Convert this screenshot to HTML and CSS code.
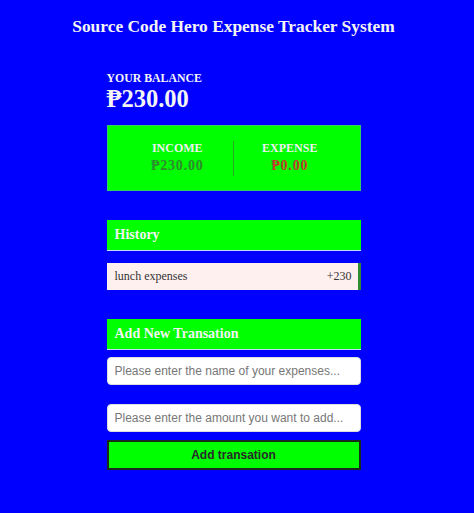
FILE: index.html
```html
<!DOCTYPE html>
<html>
<head>
<meta charset="utf-8">
<link rel="stylesheet" href="styles.css">
</head>
<body>
<h2 class="title">Source Code Hero Expense Tracker System</h2>
<div class="container">
  <h4 class="bal-label">YOUR BALANCE</h4>
  <h1 class="balance">₱230.00</h1>
  <div class="inc-exp">
    <div class="col">
      <h4 class="col-label">INCOME</h4>
      <p class="money plus">₱230.00</p>
    </div>
    <div class="col">
      <h4 class="col-label">EXPENSE</h4>
      <p class="money minus">₱0.00</p>
    </div>
  </div>
  <h3 class="section">History</h3>
  <ul class="list">
    <li class="item plus-item"><span>lunch expenses</span><span>+230</span></li>
  </ul>
  <h3 class="section section-add">Add New Transation</h3>
  <form class="form">
    <input class="field" type="text" placeholder="Please enter the name of your expenses...">
    <input class="field field-amount" type="text" placeholder="Please enter the amount you want to add...">
    <button class="btn" type="button">Add transation</button>
  </form>
</div>
</body>
</html>
```

FILE: styles.css
```css
* { box-sizing: border-box; }
html, body { margin: 0; padding: 0; }
body {
  background: #0000ff;
  width: 467px;
  min-height: 513px;
  font-family: "Liberation Serif", "Times New Roman", serif;
  color: #f4f4f4;
  padding-top: 15px;
}
.title {
  margin: 0;
  text-align: center;
  font-size: 17.4px;
  font-weight: bold;
  line-height: 22px;
}
.container {
  width: 254px;
  margin: 34px auto 0;
}
.bal-label {
  margin: 0;
  font-size: 11.8px;
  line-height: 14px;
  font-weight: bold;
}
.balance {
  margin: 1px 0 0;
  font-size: 24.5px;
  line-height: 26px;
  font-weight: bold;
}
.inc-exp {
  margin-top: 13px;
  height: 66px;
  background: #00ff00;
  border: 1px solid #33cc66;
  display: flex;
  align-items: center;
  padding: 15px 14px;
}
.col {
  flex: 1;
  text-align: center;
  height: 35px;
}
.col:first-of-type { border-right: 1px solid #22aa22; }
.col-label {
  margin: 0;
  font-size: 12px;
  line-height: 14px;
  font-weight: bold;
  color: #f0f0f0;
}
.money {
  margin: 3px 0 0;
  font-size: 14px;
  line-height: 16px;
  font-weight: bold;
  letter-spacing: 0.8px;
}
.plus { color: #2e8b2e; }
.minus { color: #c0392b; }
.section {
  margin: 29px 0 0;
  height: 31px;
  background: #00ff00;
  border-bottom: 1px solid #c8d8ff;
  padding: 0 8px;
  font-size: 14px;
  font-weight: bold;
  line-height: 30px;
  color: #f4f4f4;
}
.list {
  list-style: none;
  margin: 12px 0 0;
  padding: 0;
}
.item {
  height: 27px;
  background: #fff0f0;
  color: #333;
  font-size: 12px;
  display: flex;
  justify-content: space-between;
  align-items: center;
  padding: 0 6px 0 8px;
  border-right: 3px solid #2e8b2e;
}
.section-add { margin-top: 29px; }
.form {
  display: flex;
  flex-direction: column;
  margin-top: 7px;
}
.field {
  height: 28px;
  border: 1px solid #dddddd;
  border-radius: 4px;
  background: #fff;
  font-family: "Liberation Sans", Arial, sans-serif;
  font-size: 12px;
  padding: 0 7px;
  color: #333;
}
.field::placeholder { color: #777; }
.field-amount { margin-top: 19px; }
.btn {
  margin-top: 8px;
  height: 30px;
  background: #00ff00;
  border: 2px solid #1a2a1a;
  font-family: "Liberation Sans", Arial, sans-serif;
  font-size: 12px;
  font-weight: bold;
  color: #2a2a2a;
  padding: 0;
}
```
